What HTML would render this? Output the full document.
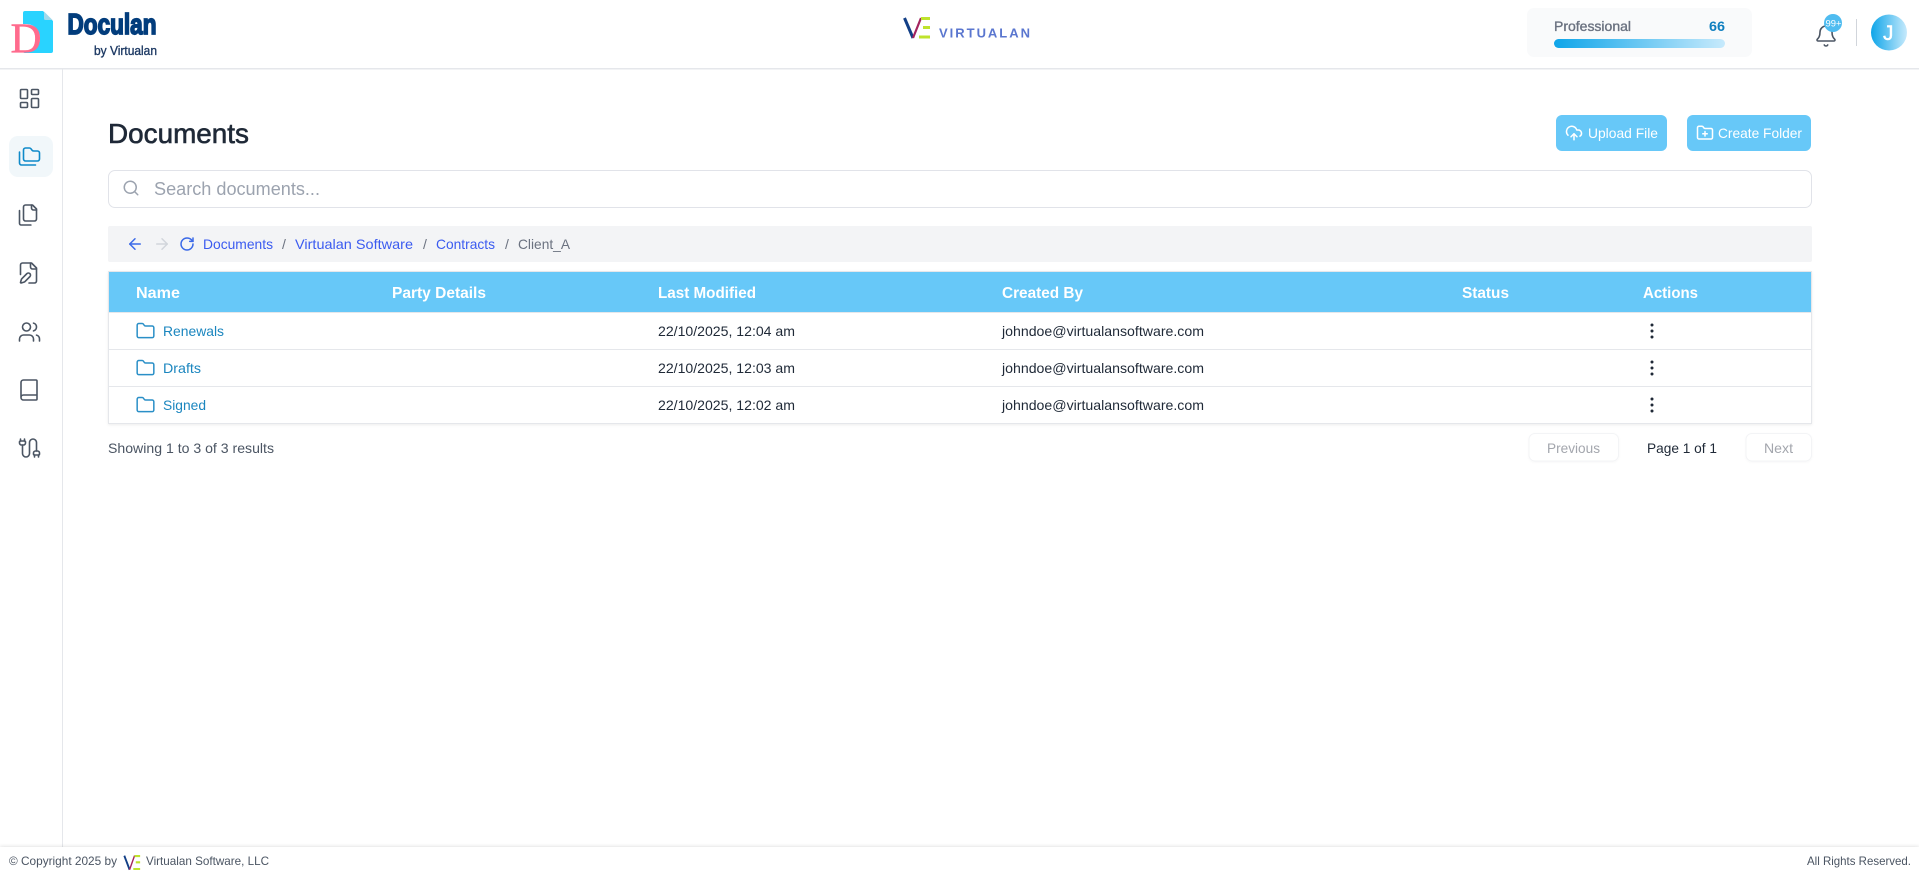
<!DOCTYPE html>
<html lang="en">
<head>
<meta charset="utf-8">
<title>Documents - Doculan</title>
<style>
html,body{margin:0;padding:0;background:#fff;width:1919px;height:873px;overflow:hidden}
svg{display:block;position:absolute;left:0;top:0}
text{font-family:"Liberation Sans",sans-serif}
.i{fill:none;stroke-linecap:round;stroke-linejoin:round;stroke-width:1.6}
.s{stroke:#4b5563}
.t{font-size:14px;fill:#1f2937}
.h{font-size:15.5px;font-weight:700;fill:#fff}
.l{font-size:14px;fill:#1b86bf}
.b{font-size:14px;fill:#3b5bf0}
</style>
</head>
<body>
<svg width="1919" height="873" viewBox="0 0 1919 873" xmlns="http://www.w3.org/2000/svg">
<defs>
<linearGradient id="g" x1="0" x2="1" y1="0" y2="0"><stop offset="0" stop-color="#0ea5e9"/><stop offset="1" stop-color="#c7eafc"/></linearGradient>
<filter id="sh" x="-2%" y="-10%" width="104%" height="120%"><feDropShadow dx="0" dy="1" stdDeviation="1.2" flood-color="#000" flood-opacity=".07"/></filter>
<filter id="sb" x="-5%" y="-20%" width="110%" height="140%"><feDropShadow dx="0" dy="1" stdDeviation="1" flood-color="#000" flood-opacity=".03"/></filter>
<filter id="ft" x="-1%" y="-50%" width="102%" height="200%"><feDropShadow dx="0" dy="-1" stdDeviation="1.5" flood-color="#000" flood-opacity=".1"/></filter>
<path id="fo" d="M20 20a2 2 0 0 0 2-2V8a2 2 0 0 0-2-2h-7.9a2 2 0 0 1-1.69-.9L9.6 3.9A2 2 0 0 0 7.93 3H4a2 2 0 0 0-2 2v13a2 2 0 0 0 2 2Z"/>
<g id="ve">
<path d="M0.500 1 L9 21" stroke="#123f86" stroke-width="3" fill="none"/>
<path d="M9 21 L17 1" stroke="#a3245f" stroke-width="2.200" fill="none"/>
<path d="M17 1.500h9M19 10.500h7M15 20h11" stroke="#bfe32c" stroke-width="3" fill="none"/>
</g>
</defs>

<!-- header -->
<rect x="0" y="68" width="1919" height="1.500" fill="#e5e7eb"/>
<path d="M23 13a2 2 0 0 1 2-2h18l10 10v30a2 2 0 0 1-2 2H25a2 2 0 0 1-2-2z" fill="#29d3ff"/>
<path d="M44 11.500l8.500 8.500h-7a1.500 1.500 0 0 1-1.500-1.500z" fill="#9fd9ec"/>
<path d="M12 24h14c9 0 14 7 14 14.500S34 52 26 52H12z" fill="#fff"/>
<text x="10.500" y="52.500" font-size="42" font-weight="400" style="font-family:'Liberation Serif',serif" fill="#ff6b8d" stroke="#ff6b8d" stroke-width=".5" textLength="31" lengthAdjust="spacingAndGlyphs">D</text>
<text x="67.500" y="34" font-size="29" font-weight="700" fill="#023d7c" stroke="#023d7c" stroke-width="1.700" textLength="89" lengthAdjust="spacingAndGlyphs">Doculan</text>
<text x="94" y="55" font-size="13" font-weight="400" fill="#1e3a64" stroke="#1e3a64" stroke-width=".35" textLength="63" lengthAdjust="spacingAndGlyphs">by Virtualan</text>

<use href="#ve" x="904" y="17"/>
<text x="939" y="37.500" font-size="13" font-weight="700" fill="#5a76cf" textLength="91">VIRTUALAN</text>

<rect x="1527" y="8" width="225" height="49" rx="7" fill="#f9fafb"/>
<text x="1554" y="31" font-size="14" fill="#6b7280" stroke="#6b7280" stroke-width=".35" textLength="77" lengthAdjust="spacingAndGlyphs">Professional</text>
<text x="1709" y="31" font-size="14" font-weight="700" fill="#0f7fbf" textLength="16" lengthAdjust="spacingAndGlyphs">66</text>
<rect x="1554" y="39" width="171" height="9" rx="4.500" fill="url(#g)"/>

<g class="i s" transform="translate(1814,24)">
<path d="M10.268 21a2 2 0 0 0 3.464 0"/>
<path d="M3.262 15.326A1 1 0 0 0 4 17h16a1 1 0 0 0 .74-1.673C19.41 13.956 18 12.499 18 8A6 6 0 0 0 6 8c0 4.499-1.411 5.956-2.738 7.326"/>
</g>
<circle cx="1833" cy="23" r="9" fill="#4fbcf0"/>
<text x="1825.500" y="26.500" font-size="9" fill="#fff" textLength="16" lengthAdjust="spacingAndGlyphs">99+</text>
<rect x="1856" y="19" width="1" height="27" fill="#d1d5db"/>
<circle cx="1889" cy="32.500" r="18" fill="url(#g)"/>
<text x="1883" y="40" font-size="21" fill="#fff" stroke="#fff" stroke-width=".4">J</text>

<!-- sidebar -->
<rect x="62" y="69" width="1" height="778" fill="#e5e7eb"/>
<g class="i s" transform="translate(17.500,86.500)"><rect x="3" y="3" width="7" height="9" rx="1"/><rect x="14" y="3" width="7" height="5" rx="1"/><rect x="14" y="12" width="7" height="9" rx="1"/><rect x="3" y="16" width="7" height="5" rx="1"/></g>
<rect x="9" y="136" width="44" height="41" rx="9" fill="#f1f7fa"/>
<g class="i" stroke="#0f8ac9" transform="translate(17.500,144)"><path d="M20 17a2 2 0 0 0 2-2V9a2 2 0 0 0-2-2h-3.900a2 2 0 0 1-1.690-.9l-.81-1.200a2 2 0 0 0-1.670-.9H8a2 2 0 0 0-2 2v9a2 2 0 0 0 2 2Z"/><path d="M2 8v11a2 2 0 0 0 2 2h14"/></g>
<g class="i s" transform="translate(16.500,203)"><path d="M20 7h-3a2 2 0 0 1-2-2V2"/><path d="M9 18a2 2 0 0 1-2-2V4a2 2 0 0 1 2-2h7l4 4v10a2 2 0 0 1-2 2Z"/><path d="M3 7.600v12.800A1.600 1.600 0 0 0 4.600 22h9.800"/></g>
<g class="i s" transform="translate(16.500,261)"><path d="M12.500 22H18a2 2 0 0 0 2-2V7l-5-5H6a2 2 0 0 0-2 2v9.500"/><path d="M14 2v4a2 2 0 0 0 2 2h4"/><path d="M13.378 15.626a1 1 0 1 0-3.004-3.004l-5.010 5.012a2 2 0 0 0-.506.854l-.837 2.870a.5.5 0 0 0 .62.62l2.870-.837a2 2 0 0 0 .854-.506z"/></g>
<g class="i s" transform="translate(17.500,320)"><path d="M16 21v-2a4 4 0 0 0-4-4H6a4 4 0 0 0-4 4v2"/><circle cx="9" cy="7" r="4"/><path d="M22 21v-2a4 4 0 0 0-3-3.870"/><path d="M16 3.130a4 4 0 0 1 0 7.750"/></g>
<g class="i s" transform="translate(17,378)"><path d="M4 19.500v-15A2.500 2.500 0 0 1 6.500 2H19a1 1 0 0 1 1 1v18a1 1 0 0 1-1 1H6.500a1 1 0 0 1 0-5H20"/></g>
<g class="i s" transform="translate(17.500,436)"><path d="M17 21v-2a1 1 0 0 1-1-1v-1a2 2 0 0 1 2-2h2a2 2 0 0 1 2 2v1a1 1 0 0 1-1 1"/><path d="M19 15V6.500a1 1 0 0 0-7 0v11a1 1 0 0 1-7 0V9"/><path d="M21 21v-2h-4"/><path d="M3 5h4V3"/><path d="M7 5a1 1 0 0 1 1 1v1a2 2 0 0 1-2 2H4a2 2 0 0 1-2-2V6a1 1 0 0 1 1-1V3"/></g>

<!-- title row -->
<text x="108" y="143" font-size="28" fill="#1f2937" stroke="#1f2937" stroke-width=".6" textLength="141" lengthAdjust="spacingAndGlyphs">Documents</text>
<rect x="1556" y="115" width="111" height="36" rx="6" fill="#67c8f8"/>
<g class="i" stroke="#fff" transform="translate(1565,124) scale(.75)" style="stroke-width:2"><path d="M12 13v8"/><path d="M4 14.899A7 7 0 1 1 15.710 8h1.790a4.500 4.500 0 0 1 2.500 8.242"/><path d="m8 17 4-4 4 4"/></g>
<text x="1588" y="138" font-size="14" fill="#fff" textLength="70" lengthAdjust="spacingAndGlyphs">Upload File</text>
<rect x="1687" y="115" width="124" height="36" rx="6" fill="#67c8f8"/>
<g class="i" stroke="#fff" transform="translate(1696,124) scale(.75)" style="stroke-width:2"><path d="M12 10v6"/><path d="M9 13h6"/><use href="#fo"/></g>
<text x="1718" y="138" font-size="14" fill="#fff" textLength="84" lengthAdjust="spacingAndGlyphs">Create Folder</text>

<!-- search -->
<rect x="108.500" y="170.500" width="1703" height="37" rx="6.500" fill="#fff" stroke="#e1e3e9"/>
<g class="i" stroke="#9ca3af" transform="translate(122,179) scale(.75)" style="stroke-width:2"><path d="m21 21-4.300-4.300"/><circle cx="11" cy="11" r="8"/></g>
<text x="154" y="195" font-size="18" fill="#9ca3af" textLength="166" lengthAdjust="spacingAndGlyphs">Search documents...</text>

<!-- breadcrumb -->
<rect x="108" y="226" width="1704" height="36" rx="2" fill="#f3f4f6"/>
<g class="i" stroke="#3b6ae8" transform="translate(126,235) scale(.75)" style="stroke-width:2"><path d="m12 19-7-7 7-7"/><path d="M19 12H5"/></g>
<g class="i" stroke="#d1d5db" transform="translate(153,235) scale(.75)" style="stroke-width:2"><path d="M5 12h14"/><path d="m12 5 7 7-7 7"/></g>
<g class="i" stroke="#3b6ae8" transform="translate(179,236) scale(.667)" style="stroke-width:2.200"><path d="M21 12a9 9 0 1 1-9-9c2.520 0 4.930 1 6.740 2.740L21 8"/><path d="M21 3v5h-5"/></g>
<text class="b" x="203" y="249" textLength="70" lengthAdjust="spacingAndGlyphs">Documents</text>
<text x="282" y="249" font-size="14" fill="#6b7280">/</text>
<text class="b" x="295" y="249" textLength="118" lengthAdjust="spacingAndGlyphs">Virtualan Software</text>
<text x="423" y="249" font-size="14" fill="#6b7280">/</text>
<text class="b" x="436" y="249" textLength="59" lengthAdjust="spacingAndGlyphs">Contracts</text>
<text x="505" y="249" font-size="14" fill="#6b7280">/</text>
<text x="518" y="249" font-size="14" fill="#6b7280" textLength="52" lengthAdjust="spacingAndGlyphs">Client_A</text>

<!-- table -->
<rect x="108.500" y="271.500" width="1703" height="152" fill="#fff" stroke="#e5e7eb" filter="url(#sh)"/>
<rect x="109" y="272" width="1702" height="40" fill="#67c8f8"/>
<rect x="109" y="312" width="1702" height="1" fill="#e5e7eb"/>
<rect x="109" y="349" width="1702" height="1" fill="#e5e7eb"/>
<rect x="109" y="386" width="1702" height="1" fill="#e5e7eb"/>
<text class="h" x="136" y="298" textLength="44" lengthAdjust="spacingAndGlyphs">Name</text>
<text class="h" x="392" y="298" textLength="94" lengthAdjust="spacingAndGlyphs">Party Details</text>
<text class="h" x="658" y="298" textLength="98" lengthAdjust="spacingAndGlyphs">Last Modified</text>
<text class="h" x="1002" y="298" textLength="81" lengthAdjust="spacingAndGlyphs">Created By</text>
<text class="h" x="1462" y="298" textLength="47" lengthAdjust="spacingAndGlyphs">Status</text>
<text class="h" x="1643" y="298" textLength="55" lengthAdjust="spacingAndGlyphs">Actions</text>

<g class="i" stroke="#2a8fc7" style="stroke-width:1.800">
<use href="#fo" transform="translate(135.500,321) scale(.833)"/>
<use href="#fo" transform="translate(135.500,358) scale(.833)"/>
<use href="#fo" transform="translate(135.500,395) scale(.833)"/>
</g>
<text class="l" x="163" y="336" textLength="61" lengthAdjust="spacingAndGlyphs">Renewals</text>
<text class="l" x="163" y="373" textLength="38" lengthAdjust="spacingAndGlyphs">Drafts</text>
<text class="l" x="163" y="410" textLength="43" lengthAdjust="spacingAndGlyphs">Signed</text>
<text class="t" x="658" y="336" textLength="137" lengthAdjust="spacingAndGlyphs">22/10/2025, 12:04 am</text>
<text class="t" x="658" y="373" textLength="137" lengthAdjust="spacingAndGlyphs">22/10/2025, 12:03 am</text>
<text class="t" x="658" y="410" textLength="137" lengthAdjust="spacingAndGlyphs">22/10/2025, 12:02 am</text>
<text class="t" x="1002" y="336" textLength="202" lengthAdjust="spacingAndGlyphs">johndoe@virtualansoftware.com</text>
<text class="t" x="1002" y="373" textLength="202" lengthAdjust="spacingAndGlyphs">johndoe@virtualansoftware.com</text>
<text class="t" x="1002" y="410" textLength="202" lengthAdjust="spacingAndGlyphs">johndoe@virtualansoftware.com</text>
<g fill="#1f2937">
<circle cx="1652" cy="325" r="1.500"/><circle cx="1652" cy="331" r="1.500"/><circle cx="1652" cy="337" r="1.500"/>
<circle cx="1652" cy="362" r="1.500"/><circle cx="1652" cy="368" r="1.500"/><circle cx="1652" cy="374" r="1.500"/>
<circle cx="1652" cy="399" r="1.500"/><circle cx="1652" cy="405" r="1.500"/><circle cx="1652" cy="411" r="1.500"/>
</g>

<!-- pagination -->
<text x="108" y="453" font-size="14" fill="#4b5563" textLength="166" lengthAdjust="spacingAndGlyphs">Showing 1 to 3 of 3 results</text>
<rect x="1529" y="433.500" width="89.500" height="27.500" rx="6" fill="#fff" stroke="#f3f4f6" filter="url(#sb)"/>
<text x="1547" y="453" font-size="14" fill="#a3a6ad" textLength="53" lengthAdjust="spacingAndGlyphs">Previous</text>
<text x="1647" y="453" font-size="14" fill="#1f2937" textLength="70" lengthAdjust="spacingAndGlyphs">Page 1 of 1</text>
<rect x="1746" y="433.500" width="65.500" height="27.500" rx="6" fill="#fff" stroke="#f3f4f6" filter="url(#sb)"/>
<text x="1764" y="453" font-size="14" fill="#a3a6ad" textLength="29" lengthAdjust="spacingAndGlyphs">Next</text>

<!-- footer -->
<rect x="0" y="847" width="1919" height="26" fill="#fff" filter="url(#ft)"/>
<text x="9" y="865" font-size="12" fill="#4b5563" textLength="108" lengthAdjust="spacingAndGlyphs">© Copyright 2025 by</text>
<use href="#ve" transform="translate(124,855) scale(.62,.7)"/>
<text x="146" y="865" font-size="12" fill="#4b5563" textLength="123" lengthAdjust="spacingAndGlyphs">Virtualan Software, LLC</text>
<text x="1807" y="865" font-size="12" fill="#4b5563" textLength="104" lengthAdjust="spacingAndGlyphs">All Rights Reserved.</text>
</svg>
</body>
</html>
